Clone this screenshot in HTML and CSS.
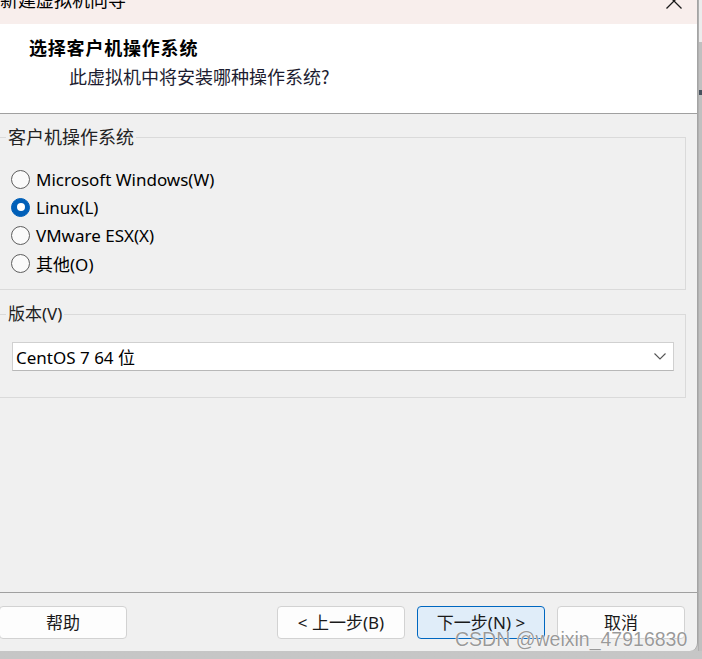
FILE: index.html
```html
<!DOCTYPE html>
<html lang="zh-CN">
<head>
<meta charset="utf-8">
<title>新建虚拟机向导</title>
<link rel="stylesheet" href="styles.css">
</head>
<body>
<div class="screen">
  <div class="dialog">
    <div class="titlebar">
      <span class="title">新建虚拟机向导</span>
      <svg class="close" width="16" height="16" viewBox="0 0 16 16"><path d="M0.5 0.5 L15.5 15.5 M15.5 0.5 L0.5 15.5" stroke="#1a1a1a" stroke-width="1.3" fill="none"/></svg>
    </div>
    <div class="header">
      <div class="h-title">选择客户机操作系统</div>
      <div class="h-sub">此虚拟机中将安装哪种操作系统?</div>
    </div>
    <div class="content">
      <fieldset class="group os-group">
        <legend>客户机操作系统</legend>
        <div class="radio-list">
          <div class="radio-row"><span class="radio"></span><span>Microsoft Windows(W)</span></div>
          <div class="radio-row"><span class="radio checked"></span><span>Linux(L)</span></div>
          <div class="radio-row"><span class="radio"></span><span>VMware ESX(X)</span></div>
          <div class="radio-row"><span class="radio"></span><span>其他(O)</span></div>
        </div>
      </fieldset>
      <fieldset class="group version-group">
        <legend>版本(V)</legend>
        <div class="select">
          <span>CentOS 7 64 位</span>
          <svg class="chev" width="12" height="7" viewBox="0 0 12 7"><path d="M0.5 0.5 L6 6 L11.5 0.5" stroke="#555" stroke-width="1.1" fill="none"/></svg>
        </div>
      </fieldset>
    </div>
    <div class="footer">
      <button class="btn help">帮助</button>
      <div class="btn-group">
        <button class="btn">&lt; 上一步(B)</button>
        <button class="btn primary">下一步(N) &gt;</button>
        <button class="btn">取消</button>
      </div>
      <div class="watermark">CSDN @weixin_47916830</div>
    </div>
  </div>
  <div class="strip">
    <div class="strip-top"></div>
    <div class="strip-mark"></div>
  </div>
</div>
</body>
</html>
```
FILE: styles.css
```css
html, body {
  margin: 0;
  padding: 0;
}
body {
  font-family: "Noto Sans", "Noto Sans CJK SC", sans-serif;
  color: #000;
  background: #bdbdbd;
  overflow: hidden;
}
.screen {
  width: 702px;
  height: 659px;
  display: flex;
  align-items: flex-start;
  background: linear-gradient(#bcbcbc, #c6c6c6);
}
.dialog {
  width: 698px;
  height: 651px;
  box-sizing: border-box;
  background: #f0f0f0;
  border-right: 1px solid #a4a4a4;
  border-bottom-right-radius: 8px;
  display: flex;
  flex-direction: column;
  overflow: hidden;
  flex: none;
}
.titlebar {
  height: 24px;
  background: #f8eeec;
  display: flex;
  justify-content: space-between;
  align-items: flex-start;
  padding-right: 15px;
  overflow: hidden;
  flex: none;
}
.title {
  font-size: 18px;
  line-height: 24px;
  margin-top: -13px;
  font-family: "Noto Sans CJK SC", sans-serif;
}
.close {
  margin-top: -7px;
}
.header {
  height: 90px;
  box-sizing: border-box;
  background: #fff;
  border-bottom: 1px solid #a0a0a0;
  font-family: "Noto Sans CJK SC", sans-serif;
  font-size: 18px;
  flex: none;
}
.h-title {
  font-weight: 700;
  letter-spacing: 0.8px;
  line-height: 24px;
  padding: 11px 0 0 29px;
}
.h-sub {
  line-height: 24px;
  padding: 5px 0 0 69px;
  color: #1c1c30;
}
.content {
  padding-top: 11px;
  flex: 1;
}
.group {
  margin: 0 11px 0 -1px;
  padding: 0;
  border: 1px solid #dadada;
  min-width: 0;
}
.group legend {
  font-size: 17px;
  line-height: 24px;
  padding: 0 2px;
  margin-left: 6px;
  color: #222;
}
.os-group legend {
  font-size: 18px;
}
.radio-list {
  padding: 16px 0 12px 11px;
  display: flex;
  flex-direction: column;
}
.radio-row {
  height: 28px;
  display: flex;
  align-items: center;
  gap: 6px;
  font-size: 17px;
}
.radio {
  width: 19px;
  height: 19px;
  box-sizing: border-box;
  border: 1px solid #5e5e5e;
  border-radius: 50%;
  background: #fafafa;
  flex: none;
  display: flex;
  align-items: center;
  justify-content: center;
}
.radio.checked {
  background: #005fb8;
  border-color: #005fb8;
}
.radio.checked::after {
  content: "";
  width: 8px;
  height: 8px;
  border-radius: 50%;
  background: #fff;
}
.version-group {
  margin-top: 12px;
}
.select {
  margin: 16px 11px 26px 12px;
  height: 29px;
  box-sizing: border-box;
  background: #fff;
  border: 1px solid #d0d0d0;
  border-bottom-color: #b8b8b8;
  display: flex;
  align-items: center;
  justify-content: space-between;
  padding: 0 7px 0 3px;
  font-size: 17px;
}
.footer {
  position: relative;
  height: 59px;
  box-sizing: border-box;
  border-top: 1px solid #a0a0a0;
  padding: 13px 12px 0 0;
  display: flex;
  justify-content: space-between;
  align-items: flex-start;
  flex: none;
}
.btn-group {
  display: flex;
  gap: 12px;
}
.btn {
  width: 128px;
  height: 33px;
  box-sizing: border-box;
  background: #fdfdfd;
  border: 1px solid #d2d2d2;
  border-radius: 4px;
  font-family: "Noto Sans", "Noto Sans CJK SC", sans-serif;
  font-size: 17px;
  color: #1a1a1a;
  padding: 0;
  line-height: 30px;
}
.btn.help {
  margin-left: -1px;
}
.btn.primary {
  background: #e0edf9;
  border-color: #0067c0;
}
.watermark {
  position: absolute;
  left: 455px;
  top: 35px;
  font-family: "Liberation Sans", sans-serif;
  font-size: 19.5px;
  line-height: 22px;
  color: rgba(120, 120, 120, 0.75);
  text-shadow: 0 0 1px #fff, 0 0 1px #fff;
  white-space: nowrap;
}
.strip {
  flex: 1;
  height: 651px;
  background: #c0c0c0;
  border-left: 1px solid #b0b0b0;
  display: flex;
  flex-direction: column;
}
.strip-top {
  height: 42px;
  background: #ececec;
}
.strip-mark {
  height: 5px;
  margin-top: 48px;
  background: #46525e;
}
```
